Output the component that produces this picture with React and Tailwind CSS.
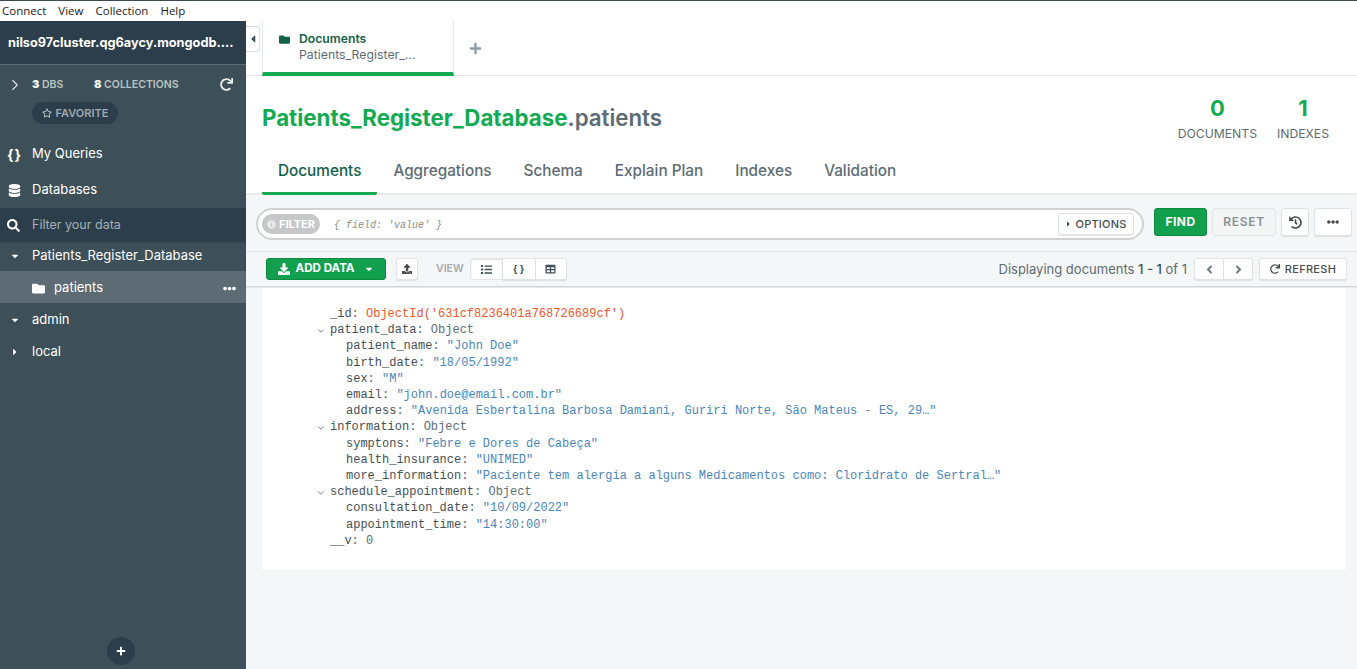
import {
  FaAngleLeft,
  FaAngleRight,
  FaCaretDown,
  FaCaretLeft,
  FaCaretRight,
  FaDatabase,
  FaDownload,
  FaEllipsisH,
  FaFolder,
  FaHistory,
  FaInfoCircle,
  FaList,
  FaPlus,
  FaRedo,
  FaRegStar,
  FaSearch,
  FaTable,
  FaUpload,
} from "react-icons/fa";
import { ChevronDown, ChevronRight } from "lucide-react";

const menuItems = ["Connect", "View", "Collection", "Help"];
const collectionTabs = ["Documents", "Aggregations", "Schema", "Explain Plan", "Indexes", "Validation"];

const docLines = [
  { indent: 0, k: "_id", v: "ObjectId('631cf8236401a768726689cf')", color: "text-[#f0562a]" },
  { indent: 0, k: "patient_data", v: "Object", open: true },
  { indent: 1, k: "patient_name", v: '"John Doe"', color: "text-[#4a86bb]" },
  { indent: 1, k: "birth_date", v: '"18/05/1992"', color: "text-[#4a86bb]" },
  { indent: 1, k: "sex", v: '"M"', color: "text-[#4a86bb]" },
  { indent: 1, k: "email", v: '"john.doe@email.com.br"', color: "text-[#4a86bb]" },
  { indent: 1, k: "address", v: '"Avenida Esbertalina Barbosa Damiani, Guriri Norte, São Mateus - ES, 29…"', color: "text-[#4a86bb]" },
  { indent: 0, k: "information", v: "Object", open: true },
  { indent: 1, k: "symptons", v: '"Febre e Dores de Cabeça"', color: "text-[#4a86bb]" },
  { indent: 1, k: "health_insurance", v: '"UNIMED"', color: "text-[#4a86bb]" },
  { indent: 1, k: "more_information", v: '"Paciente tem alergia a alguns Medicamentos como: Cloridrato de Sertral…"', color: "text-[#4a86bb]" },
  { indent: 0, k: "schedule_appointment", v: "Object", open: true },
  { indent: 1, k: "consultation_date", v: '"10/09/2022"', color: "text-[#4a86bb]" },
  { indent: 1, k: "appointment_time", v: '"14:30:00"', color: "text-[#4a86bb]" },
  { indent: 0, k: "__v", v: "0" },
];

function Sidebar() {
  return (
    <aside className="flex h-full w-[246px] shrink-0 flex-col bg-[#3d4f58] text-white">
      <div className="flex h-[44px] shrink-0 items-center border-b border-[#5d6c74] bg-[#2c3e4b] pl-2 text-[12.75px] font-bold">
        nilso97cluster.qg6aycy.mongodb.…
      </div>

      {/* Stats */}
      <div className="flex h-[37px] shrink-0 items-center pt-[2px] text-[10.5px] font-semibold text-[#b8c4c2]">
        <ChevronRight className="ml-[6px] h-[18px] w-[18px] text-[#dfe3e5]" strokeWidth={1.5} />
        <span className="ml-[8px] w-[62px]">
          <b className="text-[11px] text-white">3</b> DBS
        </span>
        <span>
          <b className="text-[11px] text-white">8</b> COLLECTIONS
        </span>
        <FaRedo className="ml-auto mr-[13px] h-[13px] w-[13px] text-[#e7eeec]" />
      </div>
      <div className="ml-[32px] flex h-[22px] w-[86px] shrink-0 items-center justify-center gap-1 rounded-full bg-[#2c3e4b] text-[11px] font-semibold text-[#9fa9ae]">
        <FaRegStar className="h-[10px] w-[10px] text-[#c3cbcf]" />
        FAVORITE
      </div>

      {/* Nav */}
      <div className="mt-[11px] flex h-[36px] shrink-0 items-center pt-[2px] text-[13px]">
        <span className="w-[32px] pl-[7px] text-[14px] font-bold tracking-[1px]">{"{}"}</span>
        My Queries
      </div>
      <div className="flex h-[36px] shrink-0 items-center pt-[2px] text-[13px]">
        <span className="w-[32px] pl-[8px]">
          <FaDatabase className="h-[13px] w-[13px]" />
        </span>
        Databases
      </div>

      {/* Filter */}
      <div className="mt-px flex h-[33px] shrink-0 items-center bg-[#2c3e4b] pt-[2px] text-[12.5px] text-[#a5b0b5] shadow-[0_1px_2px_rgba(0,0,0,0.3)]">
        <span className="w-[32px] pl-[7px] text-white">
          <FaSearch className="h-[13px] w-[13px]" />
        </span>
        Filter your data
      </div>

      {/* Database tree */}
      <div className="flex h-[30px] shrink-0 items-center text-[13px]">
        <span className="w-[32px] pl-[10px]">
          <FaCaretDown className="h-[10px] w-[10px]" />
        </span>
        Patients_Register_Database
      </div>
      <div className="flex h-[32px] shrink-0 items-center bg-[#5d6c74] pr-[10px] pt-[2px] text-[13px]">
        <FaFolder className="ml-[32px] mr-[9px] h-[13px] w-[13px]" />
        patients
        <FaEllipsisH className="ml-auto h-[13px] w-[13px]" />
      </div>
      <div className="flex h-[32px] shrink-0 items-center pt-[2px] text-[13px]">
        <span className="w-[32px] pl-[10px]">
          <FaCaretDown className="h-[10px] w-[10px]" />
        </span>
        admin
      </div>
      <div className="flex h-[32px] shrink-0 items-center pt-[2px] text-[13px]">
        <span className="w-[32px] pl-[10px]">
          <FaCaretRight className="h-[10px] w-[10px]" />
        </span>
        local
      </div>

      <div className="mb-[4px] mt-auto ml-[107px] flex h-[28px] w-[28px] items-center justify-center rounded-full bg-[#2c3e4b]">
        <FaPlus className="h-[10px] w-[10px]" />
      </div>
    </aside>
  );
}

function GreyButton({ className, children }) {
  return (
    <div className={`flex items-center justify-center rounded-[3px] border border-[#e1e4e6] bg-white shadow-[0_1px_1px_rgba(0,0,0,0.1)] ${className}`}>
      {children}
    </div>
  );
}

function DocLine({ line }) {
  return (
    <div className={`relative whitespace-pre ${line.indent ? "pl-[16px]" : ""}`}>
      {line.open && <ChevronDown className="absolute left-[-14px] top-[4px] h-[10px] w-[10px] text-[#5d6c74]" />}
      <span className="text-[#454f55]">{line.k}</span>
      <span className="text-[#5d6c74]">: </span>
      <span className={line.color || "text-[#5d6c74]"}>{line.v}</span>
    </div>
  );
}

export default function App() {
  return (
    <div className="flex h-[669px] w-[1357px] flex-col overflow-hidden bg-white font-['Inter',sans-serif]">
      {/* Window menu */}
      <div className="flex h-[21px] shrink-0 items-center gap-[12px] border-t border-[#3c4a52] pl-[2px] font-['Open_Sans',sans-serif] text-[11.5px] text-[#222]">
        {menuItems.map((item) => (
          <span key={item}>{item}</span>
        ))}
      </div>

      <div className="flex min-h-0 flex-1">
        <Sidebar />

        <main className="relative flex min-w-0 flex-1 flex-col bg-[#f5f6f7]">
          {/* Collapse handle */}
          <div className="absolute left-0 top-[5px] flex h-[26px] w-[14px] items-center justify-center rounded-r-[3px] border border-l-0 border-[#dcdfe1] bg-white">
            <FaCaretLeft className="h-[12px] w-[10px] text-[#3d4f58]" />
          </div>

          {/* Workspace tabs */}
          <div className="flex h-[55px] shrink-0 border-b border-[#e4e7e9] bg-white pl-[16px]">
            <div className="flex h-[55px] w-[192px] flex-col border-r border-l border-b-4 border-[#e4e7e9] border-b-[#13aa52] pl-[16px] pt-[10px]">
              <div className="flex items-center gap-[9px] text-[12.2px] font-semibold leading-[16px] text-[#116149]">
                <FaFolder className="h-[11px] w-[11px]" />
                Documents
              </div>
              <div className="pl-[20px] text-[12.3px] leading-[16px] text-[#5d6c74]">Patients_Register_…</div>
            </div>
            <FaPlus className="ml-[15px] mt-[21px] h-[13px] w-[13px] text-[#8f9ca3]" />
          </div>

          {/* Collection header */}
          <div className="relative h-[119px] shrink-0 border-b-2 border-[#e7eaec] bg-white px-[16px]">
            <div className="flex h-[86px] items-center justify-between pb-[2px]">
              <h1 className="text-[22.3px] font-bold text-[#13aa52]">
                Patients_Register_Database<span className="font-semibold text-[#5d6c74]">.patients</span>
              </h1>
              <div className="mr-[12px] mt-[2px] flex gap-[20px]">
                <div className="flex flex-col items-center">
                  <span className="text-[22px] font-bold leading-[28px] text-[#13aa52]">0</span>
                  <span className="mt-[3px] text-[12.2px] text-[#5d6c74]">DOCUMENTS</span>
                </div>
                <div className="flex flex-col items-center">
                  <span className="text-[22px] font-bold leading-[28px] text-[#13aa52]">1</span>
                  <span className="mt-[3px] text-[12.2px] text-[#5d6c74]">INDEXES</span>
                </div>
              </div>
            </div>
            <div className="flex h-[33px] items-start">
              {collectionTabs.map((tab, i) => (
                <div
                  key={tab}
                  className={`h-[33px] border-b-[3px] px-[16px] text-[15.3px] font-medium leading-[18px] ${
                    i === 0 ? "rounded-b-[2px] border-[#13aa52] text-[#116149]" : "border-transparent text-[#5d6c74]"
                  }`}
                >
                  {tab}
                </div>
              ))}
            </div>
          </div>

          {/* Query bar */}
          <div className="flex h-[57px] shrink-0 items-start gap-[5px] border-b border-[#e7eaec] pl-[10px] pt-[13px]">
            <div className="mr-[5px] flex h-[32px] w-[888px] items-center rounded-full border-2 border-[#cfd2d4] bg-white pl-[4px] pr-[8px]">
              <div className="flex h-[20px] w-[58px] items-center justify-center gap-[3px] rounded-full bg-[#c5c7c8] text-[11px] font-bold text-white">
                <FaInfoCircle className="h-[9px] w-[9px] text-[#e9eaea]" />
                FILTER
              </div>
              <span className="ml-[14px] mt-[2px] font-['Liberation_Mono',monospace] text-[10px] italic text-[#8a8f86]">{"{ field: 'value' }"}</span>
              <GreyButton className="ml-auto h-[22px] w-[76px] gap-[5px] text-[11px] font-medium tracking-[0.2px] text-[#464c4f]">
                <FaCaretRight className="h-[8px] w-[5px]" />
                OPTIONS
              </GreyButton>
            </div>
            <div className="flex h-[28px] w-[53px] items-center justify-center rounded-[3px] border border-[#0e8a43] bg-[#13a04e] text-[12px] font-bold tracking-[0.5px] text-white">
              FIND
            </div>
            <div className="flex h-[28px] w-[64px] items-center justify-center rounded-[3px] border border-[#e4e6e8] bg-[#f4f5f5] text-[12px] font-semibold tracking-[0.7px] text-[#8a9093]">
              RESET
            </div>
            <GreyButton className="h-[28px] w-[28px] text-[#464c4f]">
              <FaHistory className="h-[13px] w-[13px]" />
            </GreyButton>
            <GreyButton className="h-[28px] w-[38px] text-[#464c4f]">
              <FaEllipsisH className="h-[12px] w-[12px]" />
            </GreyButton>
          </div>

          {/* Document toolbar */}
          <div className="z-10 flex h-[34px] shrink-0 items-start pl-[20px] pr-[10px] pt-[6px] shadow-[0_1px_2px_rgba(0,0,0,0.2)]">
            <div className="flex h-[22px] w-[120px] items-center justify-center gap-[5px] rounded-[3px] border border-[#0e8a43] bg-[#13a04e] text-[11.6px] font-bold text-white">
              <FaDownload className="h-[12px] w-[12px]" />
              ADD DATA
              <FaCaretDown className="ml-[4px] h-[10px] w-[10px]" />
            </div>
            <GreyButton className="ml-[10px] h-[22px] w-[22px] text-[#464c4f]">
              <FaUpload className="h-[10px] w-[10px]" />
            </GreyButton>
            <span className="ml-[18px] flex h-[22px] items-center text-[10.5px] font-semibold text-[#a7abad]">VIEW</span>
            <div className="ml-[6px] flex h-[22px]">
              <GreyButton className="h-[22px] w-[33px] rounded-r-none bg-[#f1f2f3] text-[#3d4f58] shadow-[inset_0_1px_2px_rgba(0,0,0,0.12)]">
                <FaList className="h-[11px] w-[11px]" />
              </GreyButton>
              <GreyButton className="h-[22px] w-[33px] rounded-none border-l-0 text-[10px] font-bold text-[#3d4f58]">
                {"{ }"}
              </GreyButton>
              <GreyButton className="h-[22px] w-[31px] rounded-l-none border-l-0 text-[#3d4f58]">
                <FaTable className="h-[10px] w-[11px]" />
              </GreyButton>
            </div>
            <span className="ml-auto h-[22px] text-[13px] leading-[22px] text-[#5d6c74]">
              Displaying documents <span className="font-medium text-[#3d4f58]">1 - 1</span> of 1
            </span>
            <div className="ml-[7px] flex">
              <GreyButton className="h-[22px] w-[30px] rounded-r-none text-[#6d7a81]">
                <FaAngleLeft className="h-[13px] w-[13px]" />
              </GreyButton>
              <GreyButton className="h-[22px] w-[29px] rounded-l-none border-l-0 text-[#6d7a81]">
                <FaAngleRight className="h-[13px] w-[13px]" />
              </GreyButton>
            </div>
            <GreyButton className="ml-[6px] h-[22px] w-[88px] gap-[5px] text-[11px] font-medium tracking-[0.3px] text-[#464c4f]">
              <FaRedo className="h-[10px] w-[10px]" />
              REFRESH
            </GreyButton>
          </div>

          {/* Document card */}
          <div className="ml-[16px] mr-[11px] mt-[2px] bg-white pb-[21px] pl-[68px] pt-[18px] font-['Liberation_Mono',monospace] text-[12px] leading-[16.2px]">
            {docLines.map((line) => (
              <DocLine key={line.k} line={line} />
            ))}
          </div>
        </main>
      </div>
    </div>
  );
}
